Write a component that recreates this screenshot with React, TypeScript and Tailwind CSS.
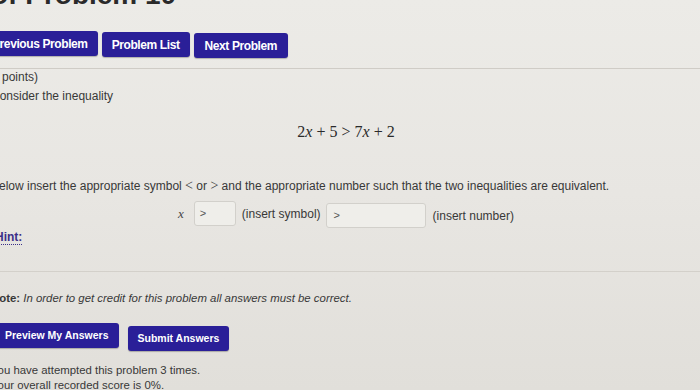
import React from "react";

const Btn = ({ children, className = "" }: { children: React.ReactNode; className?: string }) => (
  <div
    className={
      "flex items-center justify-center bg-[#2a1f98] text-white font-bold rounded-[3px] shadow-[0_1px_1px_rgba(0,0,0,0.25)] " +
      className
    }
  >
    {children}
  </div>
);

export default function App() {
  return (
    <div className="w-[700px] h-[390px] overflow-hidden bg-gradient-to-b from-[#ecebe7] via-[#e8e6e2] to-[#e1dfda] font-['Liberation_Sans',Arial,sans-serif] text-[#383838]">
      <div className="-ml-[9px] w-[718px]">
        {/* Title (cut off at top) */}
        <div className="-mt-[19px] h-[28px] text-[28px] leading-[28px] font-bold text-[#2a2a2a] whitespace-nowrap">
          of Problem 10
        </div>

        {/* Nav buttons */}
        <div className="mt-[22px] -ml-[9px] flex gap-[4px] text-[12px] tracking-[-0.4px]">
          <Btn className="h-[25px] px-[10px]">Previous Problem</Btn>
          <Btn className="h-[25px] px-[10px] mt-[1px]">Problem List</Btn>
          <Btn className="h-[25px] px-[11px] mt-[2px]">Next Problem</Btn>
        </div>

        <div className="mt-[10px] h-[1px] bg-[#cfccc6]" />

        <div className="-ml-[3px] text-[12px] leading-[16px]">(3 points)</div>
        <div className="mt-[3px] text-[12px] leading-[16px]">Consider the inequality</div>

        {/* Math */}
        <div className="mt-[20px] flex justify-center font-['Liberation_Serif',serif] text-[16px] leading-[16px] text-[#2a2a2a] pr-[8px]">
          <span>2</span>
          <span className="italic">x</span>
          <span className="mx-[4px]">+</span>
          <span>5</span>
          <span className="mx-[4px]">&gt;</span>
          <span>7</span>
          <span className="italic">x</span>
          <span className="mx-[4px]">+</span>
          <span>2</span>
        </div>

        <div className="mt-[38px] text-[12px] leading-[16px] whitespace-nowrap">
          Below insert the appropriate symbol{" "}
          <span className="font-['Liberation_Serif',serif] text-[14px]">&lt;</span> or{" "}
          <span className="font-['Liberation_Serif',serif] text-[14px]">&gt;</span> and the appropriate number such that
          the two inequalities are equivalent.
        </div>

        {/* Inputs row */}
        <div className="mt-[7px] h-[25px] flex items-center justify-center text-[12px] pr-[8px]">
          <span className="font-['Liberation_Serif',serif] italic text-[13px] text-[#444]">x</span>
          <div className="ml-[10px] h-[25px] w-[42px] bg-[#efeeea] border border-[#d2d0cb] rounded-[3px] flex items-center pl-[5px] text-[11px] text-[#555]">
            &gt;
          </div>
          <span className="ml-[6px]">(insert symbol)</span>
          <div className="ml-[5px] mt-[4px] h-[25px] w-[100px] bg-[#efeeea] border border-[#d2d0cb] rounded-[3px] flex items-center pl-[7px] text-[11px] text-[#555]">
            &gt;
          </div>
          <span className="ml-[7px] mt-[4px]">(insert number)</span>
        </div>

        <div className="mt-[3px] ml-[4px] text-[12px] leading-[16px] font-bold text-[#3b2f88]">
          <span className="border-b border-dotted border-[#3b2f88]">Hint:</span>
        </div>

        <div className="mt-[26px] h-[1px] bg-[#d3d0ca]" />

        <div className="mt-[18px] text-[11.4px] leading-[16px] whitespace-nowrap">
          <span className="font-bold">Note: </span>
          <span className="italic">In order to get credit for this problem all answers must be correct.</span>
        </div>

        <div className="mt-[17px] ml-[4px] flex gap-[9px] text-[10.5px]">
          <Btn className="h-[25px] px-[10px]">Preview My Answers</Btn>
          <Btn className="h-[25px] px-[10px] mt-[3px]">Submit Answers</Btn>
        </div>

        <div className="mt-[12px] text-[11.4px] leading-[15px]">You have attempted this problem 3 times.</div>
        <div className="text-[11.4px] leading-[15px]">Your overall recorded score is 0%.</div>
      </div>
    </div>
  );
}
